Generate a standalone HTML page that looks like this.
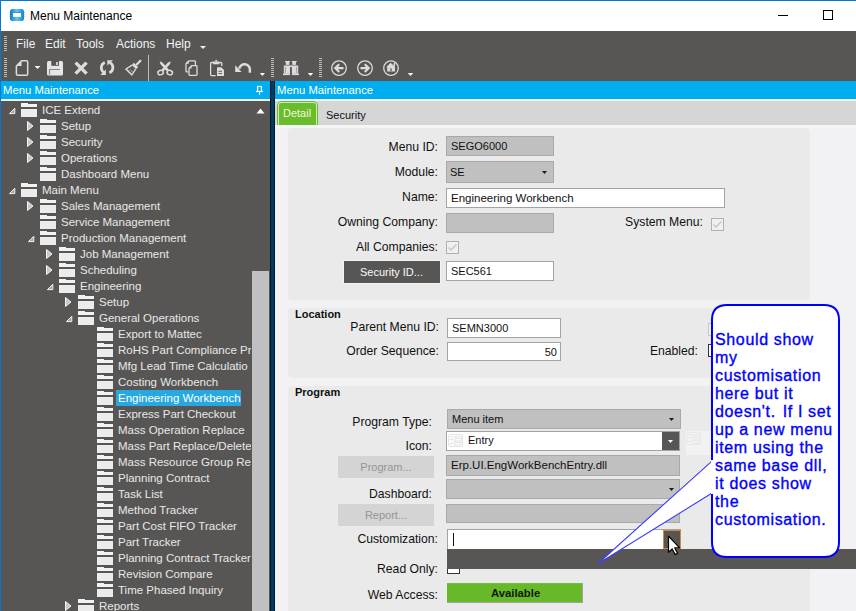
<!DOCTYPE html><html><head><meta charset="utf-8"><style>
*{margin:0;padding:0;box-sizing:border-box}
html,body{width:856px;height:611px;overflow:hidden;background:#f2f2f4;font-family:"Liberation Sans",sans-serif}
div,svg{position:absolute}
.t{white-space:nowrap}
.menu{color:#f2f2f2;font-size:12px;line-height:14px}
.tr{color:#e8e8e8;font-size:11.5px;line-height:16px;white-space:nowrap}
.lbl{font-size:12.2px;line-height:14px;color:#111;white-space:nowrap}
.inp{border:1px solid #a9a9a9;background:#c0c0c0;font-size:11px;line-height:18px;padding-left:4px;color:#111;white-space:nowrap;overflow:hidden}
.wh{background:#fff;border-color:#a3a3a3}
.grp{background:#eaeaea;border-radius:4px}
.ck{width:13px;height:13px;border:1px solid #b0b0b0;background:#f0f0f0}
</style></head><body>
<div style="left:0px;top:0px;width:856px;height:31px;background:#fff;"></div>
<div style="left:0px;top:0px;width:856px;height:1px;background:#0078d7;"></div>
<div style="left:0px;top:0px;width:1px;height:611px;background:#0078d7;"></div>
<svg style="left:9px;top:8px" width="16" height="14" viewBox="0 0 16 14">
<defs><linearGradient id="g1" x1="0" y1="0" x2="1" y2="0"><stop offset="0" stop-color="#0a7fc8"/><stop offset="0.5" stop-color="#5ecaf6"/><stop offset="1" stop-color="#0a8ad4"/></linearGradient></defs>
<rect x="1" y="1" width="14" height="12" rx="2.5" fill="url(#g1)"/>
<rect x="4" y="5" width="8" height="4" fill="#fff"/>
<path d="M0.5 4.5H15.5M0.5 6.5H4M12 6.5H15.5M0.5 8.5H4M12 8.5H15.5" stroke="#4a7c9c" stroke-width="0.8" opacity="0.8"/>
</svg>
<div class="t " style="left:30px;top:9px;font-size:12px;line-height:14px;color:#000">Menu Maintenance</div>
<div style="left:778px;top:15px;width:10px;height:1px;background:#000;"></div>
<div style="left:823px;top:10px;width:10px;height:10px;background:transparent;border:1px solid #000"></div>
<div style="left:1px;top:31px;width:855px;height:50px;background:#585655;"></div>
<div class="t menu" style="left:16px;top:37px;">File</div>
<div class="t menu" style="left:45px;top:37px;">Edit</div>
<div class="t menu" style="left:76px;top:37px;">Tools</div>
<div class="t menu" style="left:116px;top:37px;">Actions</div>
<div class="t menu" style="left:166px;top:37px;">Help</div>
<svg style="left:0;top:0" width="420" height="81" viewBox="0 0 420 81">
<path d="M4 36.5h3M4 38.5h3M4 40.5h3M4 42.5h3M4 44.5h3M4 46.5h3M4 48.5h3M4 50.5h3" stroke="#bdbdbd" stroke-width="1"/>
<path d="M4 58.5h3M4 60.5h3M4 62.5h3M4 64.5h3M4 66.5h3M4 68.5h3M4 70.5h3M4 72.5h3M4 74.5h3M4 76.5h3M271 58.5h3M271 60.5h3M271 62.5h3M271 64.5h3M271 66.5h3M271 68.5h3M271 70.5h3M271 72.5h3M271 74.5h3M271 76.5h3M319 58.5h3M319 60.5h3M319 62.5h3M319 64.5h3M319 66.5h3M319 68.5h3M319 70.5h3M319 72.5h3M319 74.5h3M319 76.5h3" stroke="#bdbdbd" stroke-width="1"/>
<path d="M200 46h6l-3 3z" fill="#f0f0f0"/>
<!-- new -->
<path d="M21.5 60.8H26.5Q27.7 60.8 27.7 62V74Q27.7 75.2 26.5 75.2H17.6Q16.4 75.2 16.4 74V66Z" fill="none" stroke="#dcdcdc" stroke-width="1.5" stroke-linejoin="round"/>
<path d="M16.6 66L21.5 61V66Z" fill="#dcdcdc"/>
<path d="M34.5 66h6l-3 3z" fill="#f4f4f4"/>
<!-- save -->
<path d="M48.5 61H61.5Q63 61 63 62.5V74Q63 75.6 61.5 75.6H48.5Q47 75.6 47 74V62.5Q47 61 48.5 61Z" fill="#e6e6e6"/>
<path d="M51.3 61H59V65.8H51.3Z" fill="#585655"/>
<rect x="56.2" y="62" width="1.6" height="3" fill="#e6e6e6"/>
<path d="M60 69.5H49.5V74.5" fill="none" stroke="#8a8886" stroke-width="1.2"/>
<!-- X -->
<path d="M75.6 62.6L86.6 73.6M86.6 62.6L75.6 73.6" stroke="#dcdcdc" stroke-width="3.4"/>
<!-- refresh -->
<path d="M104.8 62.5A5.6 5.6 0 0 0 104.2 72.6" fill="none" stroke="#dcdcdc" stroke-width="2.7"/>
<path d="M105.9 69.6V75H100.2Z" fill="#dcdcdc"/>
<path d="M109.4 72.7A5.6 5.6 0 0 0 110 62.6" fill="none" stroke="#dcdcdc" stroke-width="2.7"/>
<path d="M107.3 60.2H113L107.3 65.6Z" fill="#dcdcdc"/>
<!-- broom -->
<path d="M140.4 60.8L137 64.2" stroke="#dcdcdc" stroke-width="2.3" stroke-linecap="round"/>
<path d="M136.06 69.18L138.18 67.06L133.94 62.82L131.82 64.94Z" fill="#dcdcdc"/>
<path d="M135.7 68.8L131.9 75L125.9 69L132.2 65.2" fill="none" stroke="#dcdcdc" stroke-width="1.4" stroke-linejoin="round"/>
<path d="M128.5 70.2l1 1M130.6 69.6l1 1M129.6 72.2l1 1M131.8 71.4l1 1M127.2 68.6l0.8 0.8" stroke="#dcdcdc" stroke-width="0.9"/>
<path d="M132.9 66.3L135.1 68.5" stroke="#8a8886" stroke-width="0.5"/>
<!-- separator -->
<rect x="148" y="55" width="1" height="26" fill="#bdbdbd"/>
<!-- scissors -->
<path d="M159.7 61.2L162.4 62.6L168.8 69.6L166.8 71.2L160.4 64Z" fill="#dcdcdc"/>
<path d="M170.7 61.2L168 62.6L161.6 69.6L163.6 71.2L170 64Z" fill="#dcdcdc"/>
<ellipse cx="160.6" cy="72.6" rx="2.7" ry="2.2" fill="none" stroke="#dcdcdc" stroke-width="1.5" transform="rotate(-20 160.6 72.6)"/>
<ellipse cx="169.8" cy="72.6" rx="2.7" ry="2.2" fill="none" stroke="#dcdcdc" stroke-width="1.5" transform="rotate(20 169.8 72.6)"/>
<!-- copy -->
<path d="M188.8 60.8L186 63.8V71.2Q186 71.8 186.6 71.8H188.4" fill="none" stroke="#dcdcdc" stroke-width="1.3" stroke-linejoin="round"/>
<path d="M188.8 60.8H194.6Q195.4 60.8 195.4 61.6V65.2" fill="none" stroke="#dcdcdc" stroke-width="1.3"/>
<path d="M186 63.8L188.8 60.8V63.8Z" fill="#dcdcdc"/>
<path d="M191.6 65.6H196.2Q197 65.6 197 66.4V74.6Q197 75.4 196.2 75.4H189.8Q189 75.4 189 74.6V68.4Z" fill="none" stroke="#dcdcdc" stroke-width="1.3" stroke-linejoin="round"/>
<path d="M189 68.4L191.6 65.6V68.4Z" fill="#dcdcdc"/>
<!-- paste -->
<path d="M213 62.5H211.5Q210.6 62.5 210.6 63.5V74.6Q210.6 75.6 211.5 75.6H215.6M221.8 66V63.5Q221.8 62.5 220.8 62.5H219.4" fill="none" stroke="#dcdcdc" stroke-width="1.3"/>
<path d="M213 61.5H219.5V64.3H213Z" fill="#dcdcdc"/>
<circle cx="216.2" cy="60.8" r="1" fill="#dcdcdc"/>
<path d="M217 67.2H221.2L224 70V75.9H217Z" fill="#dcdcdc"/>
<path d="M218.5 71.3h3.5M218.5 73.5h3.5" stroke="#585655" stroke-width="0.9"/>
<!-- undo -->
<path d="M239.2 68.8A5.4 5.4 0 0 1 249.9 70.5V72.8" fill="none" stroke="#dcdcdc" stroke-width="2.5"/>
<path d="M235.2 65.2V72H241.6Z" fill="#dcdcdc"/>
<path d="M259.8 73h5.2l-2.6 3z" fill="#f4f4f4"/>
<!-- binoculars -->
<rect x="285" y="61" width="5" height="1" fill="#dcdcdc"/>
<rect x="285.8" y="61.5" width="3.6" height="3.4" fill="#dcdcdc"/>
<rect x="291.7" y="61" width="5" height="1" fill="#dcdcdc"/>
<rect x="292.3" y="61.5" width="3.6" height="3.4" fill="#dcdcdc"/>
<rect x="283.8" y="65.5" width="6.2" height="8.3" fill="#dcdcdc"/>
<rect x="291.9" y="65.5" width="6.3" height="8.3" fill="#dcdcdc"/>
<rect x="283" y="73.6" width="7" height="1.5" fill="#dcdcdc"/>
<rect x="291.9" y="73.6" width="7" height="1.5" fill="#dcdcdc"/>
<rect x="290" y="65.3" width="1.9" height="1.8" fill="#dcdcdc"/>
<path d="M285.4 67v6M296.6 67v6" stroke="#8a8886" stroke-width="0.7"/>
<path d="M307.7 73h5.6l-2.8 3z" fill="#f4f4f4"/>
<!-- back / fwd / home -->
<circle cx="339" cy="68.1" r="7.3" fill="none" stroke="#dcdcdc" stroke-width="1.3"/>
<path d="M343.5 68.1H335.8M339.2 64.2L335.3 68.1L339.2 72" fill="none" stroke="#dcdcdc" stroke-width="2.2"/>
<circle cx="365" cy="68.1" r="7.3" fill="none" stroke="#dcdcdc" stroke-width="1.3"/>
<path d="M360.5 68.1H368.2M364.8 64.2L368.7 68.1L364.8 72" fill="none" stroke="#dcdcdc" stroke-width="2.2"/>
<circle cx="391" cy="68.1" r="7.3" fill="none" stroke="#dcdcdc" stroke-width="1.3"/>
<path d="M386.2 67.2L390.6 62.8L395.4 67.2Z" fill="#dcdcdc"/>
<rect x="387.2" y="66.6" width="7.8" height="4.9" fill="#dcdcdc"/>
<rect x="393.5" y="63" width="1.6" height="3" fill="#dcdcdc"/>
<rect x="389.9" y="68.3" width="2.1" height="3.2" fill="#8a8886"/>
<path d="M407.7 73h5.6l-2.8 3z" fill="#f4f4f4"/>
</svg>
<div style="left:1px;top:81px;width:269px;height:18px;background:#00adef;"></div>
<div class="t " style="left:3px;top:83px;font-size:11.3px;line-height:14px;color:#fff">Menu Maintenance</div>
<div style="left:1px;top:99px;width:269px;height:2px;background:#f6f3ef;"></div>
<div style="left:1px;top:101px;width:269px;height:510px;background:#585655;"></div>
<div style="left:1px;top:101px;width:250px;height:510px;overflow:hidden">
<svg style="left:8px;top:6px" width="7" height="8" viewBox="0 0 7 8"><path d="M5.8 1.2V6.6H0.4Z" fill="#a8a6a4" stroke="#f0f0f0" stroke-width="1"/></svg>
<svg style="left:20px;top:1px" width="16" height="15" viewBox="0 0 16 15"><rect x="0" y="1" width="7" height="2" fill="#f2f2f2"/><rect x="0" y="2" width="16" height="3" fill="#f2f2f2"/><rect x="0" y="7" width="16" height="8" fill="#ececec"/></svg>
<div class="tr" style="left:41px;top:1px">ICE Extend</div>
<svg style="left:26px;top:20px" width="7" height="10" viewBox="0 0 7 10"><path d="M0.5 0.5L6 5L0.5 9.5Z" fill="#c8c8c8" stroke="#f4f4f4" stroke-width="1"/></svg>
<svg style="left:39px;top:17px" width="16" height="15" viewBox="0 0 16 15"><rect x="0" y="1" width="7" height="2" fill="#f2f2f2"/><rect x="0" y="2" width="16" height="3" fill="#f2f2f2"/><rect x="0" y="7" width="16" height="8" fill="#ececec"/></svg>
<div class="tr" style="left:60px;top:17px">Setup</div>
<svg style="left:26px;top:36px" width="7" height="10" viewBox="0 0 7 10"><path d="M0.5 0.5L6 5L0.5 9.5Z" fill="#c8c8c8" stroke="#f4f4f4" stroke-width="1"/></svg>
<svg style="left:39px;top:33px" width="16" height="15" viewBox="0 0 16 15"><rect x="0" y="1" width="7" height="2" fill="#f2f2f2"/><rect x="0" y="2" width="16" height="3" fill="#f2f2f2"/><rect x="0" y="7" width="16" height="8" fill="#ececec"/></svg>
<div class="tr" style="left:60px;top:33px">Security</div>
<svg style="left:26px;top:52px" width="7" height="10" viewBox="0 0 7 10"><path d="M0.5 0.5L6 5L0.5 9.5Z" fill="#c8c8c8" stroke="#f4f4f4" stroke-width="1"/></svg>
<svg style="left:39px;top:49px" width="16" height="15" viewBox="0 0 16 15"><rect x="0" y="1" width="7" height="2" fill="#f2f2f2"/><rect x="0" y="2" width="16" height="3" fill="#f2f2f2"/><rect x="0" y="7" width="16" height="8" fill="#ececec"/></svg>
<div class="tr" style="left:60px;top:49px">Operations</div>
<svg style="left:39px;top:65px" width="16" height="15" viewBox="0 0 16 15"><rect x="0" y="1" width="7" height="2" fill="#f2f2f2"/><rect x="0" y="2" width="16" height="3" fill="#f2f2f2"/><rect x="0" y="7" width="16" height="8" fill="#ececec"/></svg>
<div class="tr" style="left:60px;top:65px">Dashboard Menu</div>
<svg style="left:8px;top:86px" width="7" height="8" viewBox="0 0 7 8"><path d="M5.8 1.2V6.6H0.4Z" fill="#a8a6a4" stroke="#f0f0f0" stroke-width="1"/></svg>
<svg style="left:20px;top:81px" width="16" height="15" viewBox="0 0 16 15"><rect x="0" y="1" width="7" height="2" fill="#f2f2f2"/><rect x="0" y="2" width="16" height="3" fill="#f2f2f2"/><rect x="0" y="7" width="16" height="8" fill="#ececec"/></svg>
<div class="tr" style="left:41px;top:81px">Main Menu</div>
<svg style="left:26px;top:100px" width="7" height="10" viewBox="0 0 7 10"><path d="M0.5 0.5L6 5L0.5 9.5Z" fill="#c8c8c8" stroke="#f4f4f4" stroke-width="1"/></svg>
<svg style="left:39px;top:97px" width="16" height="15" viewBox="0 0 16 15"><rect x="0" y="1" width="7" height="2" fill="#f2f2f2"/><rect x="0" y="2" width="16" height="3" fill="#f2f2f2"/><rect x="0" y="7" width="16" height="8" fill="#ececec"/></svg>
<div class="tr" style="left:60px;top:97px">Sales Management</div>
<svg style="left:39px;top:113px" width="16" height="15" viewBox="0 0 16 15"><rect x="0" y="1" width="7" height="2" fill="#f2f2f2"/><rect x="0" y="2" width="16" height="3" fill="#f2f2f2"/><rect x="0" y="7" width="16" height="8" fill="#ececec"/></svg>
<div class="tr" style="left:60px;top:113px">Service Management</div>
<svg style="left:27px;top:134px" width="7" height="8" viewBox="0 0 7 8"><path d="M5.8 1.2V6.6H0.4Z" fill="#a8a6a4" stroke="#f0f0f0" stroke-width="1"/></svg>
<svg style="left:39px;top:129px" width="16" height="15" viewBox="0 0 16 15"><rect x="0" y="1" width="7" height="2" fill="#f2f2f2"/><rect x="0" y="2" width="16" height="3" fill="#f2f2f2"/><rect x="0" y="7" width="16" height="8" fill="#ececec"/></svg>
<div class="tr" style="left:60px;top:129px">Production Management</div>
<svg style="left:45px;top:148px" width="7" height="10" viewBox="0 0 7 10"><path d="M0.5 0.5L6 5L0.5 9.5Z" fill="#c8c8c8" stroke="#f4f4f4" stroke-width="1"/></svg>
<svg style="left:58px;top:145px" width="16" height="15" viewBox="0 0 16 15"><rect x="0" y="1" width="7" height="2" fill="#f2f2f2"/><rect x="0" y="2" width="16" height="3" fill="#f2f2f2"/><rect x="0" y="7" width="16" height="8" fill="#ececec"/></svg>
<div class="tr" style="left:79px;top:145px">Job Management</div>
<svg style="left:45px;top:164px" width="7" height="10" viewBox="0 0 7 10"><path d="M0.5 0.5L6 5L0.5 9.5Z" fill="#c8c8c8" stroke="#f4f4f4" stroke-width="1"/></svg>
<svg style="left:58px;top:161px" width="16" height="15" viewBox="0 0 16 15"><rect x="0" y="1" width="7" height="2" fill="#f2f2f2"/><rect x="0" y="2" width="16" height="3" fill="#f2f2f2"/><rect x="0" y="7" width="16" height="8" fill="#ececec"/></svg>
<div class="tr" style="left:79px;top:161px">Scheduling</div>
<svg style="left:46px;top:182px" width="7" height="8" viewBox="0 0 7 8"><path d="M5.8 1.2V6.6H0.4Z" fill="#a8a6a4" stroke="#f0f0f0" stroke-width="1"/></svg>
<svg style="left:58px;top:177px" width="16" height="15" viewBox="0 0 16 15"><rect x="0" y="1" width="7" height="2" fill="#f2f2f2"/><rect x="0" y="2" width="16" height="3" fill="#f2f2f2"/><rect x="0" y="7" width="16" height="8" fill="#ececec"/></svg>
<div class="tr" style="left:79px;top:177px">Engineering</div>
<svg style="left:64px;top:196px" width="7" height="10" viewBox="0 0 7 10"><path d="M0.5 0.5L6 5L0.5 9.5Z" fill="#c8c8c8" stroke="#f4f4f4" stroke-width="1"/></svg>
<svg style="left:77px;top:193px" width="16" height="15" viewBox="0 0 16 15"><rect x="0" y="1" width="7" height="2" fill="#f2f2f2"/><rect x="0" y="2" width="16" height="3" fill="#f2f2f2"/><rect x="0" y="7" width="16" height="8" fill="#ececec"/></svg>
<div class="tr" style="left:98px;top:193px">Setup</div>
<svg style="left:65px;top:214px" width="7" height="8" viewBox="0 0 7 8"><path d="M5.8 1.2V6.6H0.4Z" fill="#a8a6a4" stroke="#f0f0f0" stroke-width="1"/></svg>
<svg style="left:77px;top:209px" width="16" height="15" viewBox="0 0 16 15"><rect x="0" y="1" width="7" height="2" fill="#f2f2f2"/><rect x="0" y="2" width="16" height="3" fill="#f2f2f2"/><rect x="0" y="7" width="16" height="8" fill="#ececec"/></svg>
<div class="tr" style="left:98px;top:209px">General Operations</div>
<svg style="left:96px;top:225px" width="16" height="15" viewBox="0 0 16 15"><rect x="0" y="1" width="7" height="2" fill="#f2f2f2"/><rect x="0" y="2" width="16" height="3" fill="#f2f2f2"/><rect x="0" y="7" width="16" height="8" fill="#ececec"/></svg>
<div class="tr" style="left:117px;top:225px">Export to Mattec</div>
<svg style="left:96px;top:241px" width="16" height="15" viewBox="0 0 16 15"><rect x="0" y="1" width="7" height="2" fill="#f2f2f2"/><rect x="0" y="2" width="16" height="3" fill="#f2f2f2"/><rect x="0" y="7" width="16" height="8" fill="#ececec"/></svg>
<div class="tr" style="left:117px;top:241px">RoHS Part Compliance Process</div>
<svg style="left:96px;top:257px" width="16" height="15" viewBox="0 0 16 15"><rect x="0" y="1" width="7" height="2" fill="#f2f2f2"/><rect x="0" y="2" width="16" height="3" fill="#f2f2f2"/><rect x="0" y="7" width="16" height="8" fill="#ececec"/></svg>
<div class="tr" style="left:117px;top:257px">Mfg Lead Time Calculatio</div>
<svg style="left:96px;top:273px" width="16" height="15" viewBox="0 0 16 15"><rect x="0" y="1" width="7" height="2" fill="#f2f2f2"/><rect x="0" y="2" width="16" height="3" fill="#f2f2f2"/><rect x="0" y="7" width="16" height="8" fill="#ececec"/></svg>
<div class="tr" style="left:117px;top:273px">Costing Workbench</div>
<svg style="left:96px;top:289px" width="16" height="15" viewBox="0 0 16 15"><rect x="0" y="1" width="7" height="2" fill="#f2f2f2"/><rect x="0" y="2" width="16" height="3" fill="#f2f2f2"/><rect x="0" y="7" width="16" height="8" fill="#ececec"/></svg>
<div style="left:115px;top:289px;width:125px;height:16px;background:#28a8e0"></div>
<div class="tr" style="left:117px;top:289px;color:#fff">Engineering Workbench</div>
<svg style="left:96px;top:305px" width="16" height="15" viewBox="0 0 16 15"><rect x="0" y="1" width="7" height="2" fill="#f2f2f2"/><rect x="0" y="2" width="16" height="3" fill="#f2f2f2"/><rect x="0" y="7" width="16" height="8" fill="#ececec"/></svg>
<div class="tr" style="left:117px;top:305px">Express Part Checkout</div>
<svg style="left:96px;top:321px" width="16" height="15" viewBox="0 0 16 15"><rect x="0" y="1" width="7" height="2" fill="#f2f2f2"/><rect x="0" y="2" width="16" height="3" fill="#f2f2f2"/><rect x="0" y="7" width="16" height="8" fill="#ececec"/></svg>
<div class="tr" style="left:117px;top:321px">Mass Operation Replace</div>
<svg style="left:96px;top:337px" width="16" height="15" viewBox="0 0 16 15"><rect x="0" y="1" width="7" height="2" fill="#f2f2f2"/><rect x="0" y="2" width="16" height="3" fill="#f2f2f2"/><rect x="0" y="7" width="16" height="8" fill="#ececec"/></svg>
<div class="tr" style="left:117px;top:337px">Mass Part Replace/Delete</div>
<svg style="left:96px;top:353px" width="16" height="15" viewBox="0 0 16 15"><rect x="0" y="1" width="7" height="2" fill="#f2f2f2"/><rect x="0" y="2" width="16" height="3" fill="#f2f2f2"/><rect x="0" y="7" width="16" height="8" fill="#ececec"/></svg>
<div class="tr" style="left:117px;top:353px">Mass Resource Group Replace</div>
<svg style="left:96px;top:369px" width="16" height="15" viewBox="0 0 16 15"><rect x="0" y="1" width="7" height="2" fill="#f2f2f2"/><rect x="0" y="2" width="16" height="3" fill="#f2f2f2"/><rect x="0" y="7" width="16" height="8" fill="#ececec"/></svg>
<div class="tr" style="left:117px;top:369px">Planning Contract</div>
<svg style="left:96px;top:385px" width="16" height="15" viewBox="0 0 16 15"><rect x="0" y="1" width="7" height="2" fill="#f2f2f2"/><rect x="0" y="2" width="16" height="3" fill="#f2f2f2"/><rect x="0" y="7" width="16" height="8" fill="#ececec"/></svg>
<div class="tr" style="left:117px;top:385px">Task List</div>
<svg style="left:96px;top:401px" width="16" height="15" viewBox="0 0 16 15"><rect x="0" y="1" width="7" height="2" fill="#f2f2f2"/><rect x="0" y="2" width="16" height="3" fill="#f2f2f2"/><rect x="0" y="7" width="16" height="8" fill="#ececec"/></svg>
<div class="tr" style="left:117px;top:401px">Method Tracker</div>
<svg style="left:96px;top:417px" width="16" height="15" viewBox="0 0 16 15"><rect x="0" y="1" width="7" height="2" fill="#f2f2f2"/><rect x="0" y="2" width="16" height="3" fill="#f2f2f2"/><rect x="0" y="7" width="16" height="8" fill="#ececec"/></svg>
<div class="tr" style="left:117px;top:417px">Part Cost FIFO Tracker</div>
<svg style="left:96px;top:433px" width="16" height="15" viewBox="0 0 16 15"><rect x="0" y="1" width="7" height="2" fill="#f2f2f2"/><rect x="0" y="2" width="16" height="3" fill="#f2f2f2"/><rect x="0" y="7" width="16" height="8" fill="#ececec"/></svg>
<div class="tr" style="left:117px;top:433px">Part Tracker</div>
<svg style="left:96px;top:449px" width="16" height="15" viewBox="0 0 16 15"><rect x="0" y="1" width="7" height="2" fill="#f2f2f2"/><rect x="0" y="2" width="16" height="3" fill="#f2f2f2"/><rect x="0" y="7" width="16" height="8" fill="#ececec"/></svg>
<div class="tr" style="left:117px;top:449px">Planning Contract Tracker</div>
<svg style="left:96px;top:465px" width="16" height="15" viewBox="0 0 16 15"><rect x="0" y="1" width="7" height="2" fill="#f2f2f2"/><rect x="0" y="2" width="16" height="3" fill="#f2f2f2"/><rect x="0" y="7" width="16" height="8" fill="#ececec"/></svg>
<div class="tr" style="left:117px;top:465px">Revision Compare</div>
<svg style="left:96px;top:481px" width="16" height="15" viewBox="0 0 16 15"><rect x="0" y="1" width="7" height="2" fill="#f2f2f2"/><rect x="0" y="2" width="16" height="3" fill="#f2f2f2"/><rect x="0" y="7" width="16" height="8" fill="#ececec"/></svg>
<div class="tr" style="left:117px;top:481px">Time Phased Inquiry</div>
<svg style="left:64px;top:500px" width="7" height="10" viewBox="0 0 7 10"><path d="M0.5 0.5L6 5L0.5 9.5Z" fill="#c8c8c8" stroke="#f4f4f4" stroke-width="1"/></svg>
<svg style="left:77px;top:497px" width="16" height="15" viewBox="0 0 16 15"><rect x="0" y="1" width="7" height="2" fill="#f2f2f2"/><rect x="0" y="2" width="16" height="3" fill="#f2f2f2"/><rect x="0" y="7" width="16" height="8" fill="#ececec"/></svg>
<div class="tr" style="left:98px;top:497px">Reports</div>
</div>
<svg style="left:256px;top:108px" width="9" height="6" viewBox="0 0 9 6"><path d="M0.5 5.5L4.5 0.5L8.5 5.5Z" fill="#fff"/></svg>
<div style="left:252px;top:271px;width:17px;height:340px;background:#c0c0c0;"></div>
<div style="left:270px;top:81px;width:5px;height:530px;background:#003c60;border-left:1px solid #061722;border-right:1px solid #061722"></div>
<div style="left:275px;top:81px;width:581px;height:18px;background:#00adef;"></div>
<div class="t " style="left:277px;top:83px;font-size:11.3px;line-height:14px;color:#fff">Menu Maintenance</div>
<div style="left:275px;top:99px;width:581px;height:2px;background:#f6f6f6;"></div>
<div style="left:275px;top:101px;width:581px;height:24px;background:#d6d6d6;"></div>
<div style="left:275px;top:125px;width:581px;height:3px;background:#f6f6f6;"></div>
<div style="left:277px;top:101px;width:41px;height:24px;background:#69bc2b;border-radius:5px 5px 0 0"></div>
<div style="left:278px;top:102px;width:39px;height:23px;border:1px solid #cfe9bb;border-bottom:none;border-radius:4px 4px 0 0"></div>
<div class="t " style="left:283px;top:107px;font-size:11px;line-height:12px;color:#f4f8dc">Detail</div>
<div class="t " style="left:326px;top:109px;font-size:11px;line-height:12px;color:#111">Security</div>
<div class="grp" style="left:288px;top:128px;width:522px;height:172px"></div>
<div class="grp" style="left:288px;top:308px;width:522px;height:70px"></div>
<div class="grp" style="left:288px;top:386px;width:522px;height:230px"></div>
<div class="lbl" style="right:418px;top:140px;">Menu ID:</div>
<div class="inp" style="left:446px;top:136px;width:108px;height:20px;">SEGO6000</div>
<div class="lbl" style="right:418px;top:165px;">Module:</div>
<div class="inp" style="left:446px;top:161px;width:108px;height:22px;line-height:20px;padding-left:3px">SE</div>
<svg style="left:541.5px;top:171px" width="5" height="3" viewBox="0 0 5 3"><path d="M0 0H5L2.5 3Z" fill="#1a1a1a"/></svg>
<div class="lbl" style="right:418px;top:190px;">Name:</div>
<div class="inp wh" style="left:446px;top:188px;width:279px;height:20px;font-size:11.5px">Engineering Workbench</div>
<div class="lbl" style="right:418px;top:215px;">Owning Company:</div>
<div class="inp" style="left:446px;top:213px;width:108px;height:20px;"></div>
<div class="lbl" style="right:153px;top:215px;">System Menu:</div>
<div class="ck" style="left:711px;top:218px;border-color:#b0b0b0;background:#f0f0f0"></div>
<svg style="left:711px;top:218px" width="13" height="13" viewBox="0 0 13 13"><path d="M2.5 6.5L5 9L10.5 3.5" fill="none" stroke="#c4c4c4" stroke-width="1.3"/></svg>
<div class="lbl" style="right:418px;top:240px;">All Companies:</div>
<div class="ck" style="left:446px;top:241px;border-color:#b0b0b0;background:#f0f0f0"></div>
<svg style="left:446px;top:241px" width="13" height="13" viewBox="0 0 13 13"><path d="M2.5 6.5L5 9L10.5 3.5" fill="none" stroke="#c4c4c4" stroke-width="1.3"/></svg>
<div style="left:343px;top:260px;width:98px;height:24px;background:#585655;border:1px solid #f2f2f2"></div>
<div class="t " style="left:360px;top:266px;font-size:11px;line-height:12px;color:#fafafa">Security ID...</div>
<div class="inp wh" style="left:446px;top:261px;width:108px;height:20px;">SEC561</div>
<div class="t " style="left:295px;top:308px;font-size:11px;line-height:12px;font-weight:bold;color:#111">Location</div>
<div class="lbl" style="right:417px;top:320px;">Parent Menu ID:</div>
<div class="inp wh" style="left:447px;top:318px;width:114px;height:20px;">SEMN3000</div>
<div class="lbl" style="right:417px;top:344px;">Order Sequence:</div>
<div class="inp wh" style="left:447px;top:342px;width:114px;height:19px;text-align:right;padding-right:3px">50</div>
<div class="lbl" style="right:158px;top:344px;">Enabled:</div>
<div style="left:708px;top:344px;width:13px;height:13px;border:1px solid #333;background:#fff"></div>
<div style="left:708px;top:323px;width:13px;height:13px;border:1px solid #c8c8c8;background:#f0f0f0"></div>
<div class="t " style="left:295px;top:386px;font-size:11px;line-height:12px;font-weight:bold;color:#111">Program</div>
<div class="lbl" style="right:424px;top:415px;">Program Type:</div>
<div class="inp" style="left:447px;top:409px;width:234px;height:20px;line-height:18px">Menu item</div>
<svg style="left:668.5px;top:418px" width="5" height="3" viewBox="0 0 5 3"><path d="M0 0H5L2.5 3Z" fill="#1a1a1a"/></svg>
<div class="lbl" style="right:424px;top:439px;">Icon:</div>
<div class="inp wh" style="left:446px;top:431px;width:234px;height:20px;"></div>
<svg style="left:448px;top:434px" width="15" height="13" viewBox="0 0 15 13"><rect x="0.5" y="0.5" width="14" height="12" rx="1.5" fill="#fbfbfb" stroke="#e6e6e6"/><path d="M0.5 2.8H14.5" stroke="#e6e6e6"/><path d="M2 5.5h3M2 9.5h3" stroke="#e0e0e0"/><rect x="6.5" y="4.5" width="6.5" height="2.5" fill="none" stroke="#e6e6e6"/><rect x="6.5" y="8.5" width="6.5" height="2.5" fill="none" stroke="#e6e6e6"/></svg>
<div class="t " style="left:468px;top:434px;font-size:11px;line-height:12px;color:#111">Entry</div>
<div style="left:662px;top:432px;width:17px;height:18px;background:#585655;"></div>
<svg style="left:667.5px;top:440px" width="5" height="3" viewBox="0 0 5 3"><path d="M0 0H5L2.5 3Z" fill="#fff"/></svg>
<div style="left:686px;top:431px;width:26px;height:24px;background:#f2f2f4"></div>
<svg style="left:687px;top:432px" width="14" height="13" viewBox="0 0 14 13"><rect x="0.5" y="0.5" width="13" height="12" rx="1.5" fill="#f2f2f4" stroke="#e8e8e8"/><path d="M0.5 2.8H13.5" stroke="#e8e8e8"/><path d="M1.5 5.5h3M1.5 9.5h3" stroke="#e4e4e4"/><rect x="6" y="4.5" width="6" height="2.5" fill="none" stroke="#e8e8e8"/><rect x="6" y="8.5" width="6" height="2.5" fill="none" stroke="#e8e8e8"/></svg>
<div style="left:338px;top:456px;width:96px;height:22px;background:#d4d4d4;"></div>
<div class="t" style="left:338px;top:461px;width:96px;text-align:center;font-size:11px;line-height:12px;color:#949494">Program...</div>
<div class="inp" style="left:446px;top:455px;width:234px;height:21px;padding-left:4px;font-size:11.5px">Erp.UI.EngWorkBenchEntry.dll</div>
<div class="lbl" style="right:424px;top:487px;">Dashboard:</div>
<div class="inp" style="left:446px;top:479px;width:234px;height:20px;"></div>
<svg style="left:668.5px;top:488px" width="5" height="3" viewBox="0 0 5 3"><path d="M0 0H5L2.5 3Z" fill="#1a1a1a"/></svg>
<div style="left:338px;top:504px;width:96px;height:22px;background:#d4d4d4;"></div>
<div class="t" style="left:338px;top:509px;width:96px;text-align:center;font-size:11px;line-height:12px;color:#949494">Report...</div>
<div class="inp" style="left:446px;top:504px;width:234px;height:19px;"></div>
<div class="lbl" style="right:418px;top:532px;">Customization:</div>
<div class="inp wh" style="left:447px;top:529px;width:234px;height:21px;"></div>
<div style="left:453px;top:533px;width:1.3px;height:13px;background:#111;"></div>
<div style="left:663px;top:530px;width:18px;height:19px;background:#585655;border:1px solid #d28a36"></div>
<div class="lbl" style="right:418px;top:562px;">Read Only:</div>
<div style="left:447px;top:561px;width:13px;height:13px;border:1px solid #333;background:#fff"></div>
<div style="left:447px;top:549px;width:409px;height:20px;background:#585655;"></div>
<div class="lbl" style="right:418px;top:588px;">Web Access:</div>
<div style="left:447px;top:583px;width:136px;height:20px;background:#67b92a;border-top:1px solid #70c234;border-right:1px solid #a4a4a4;border-bottom:1px solid #a4a4a4"></div>
<div class="t " style="left:491px;top:587px;font-size:11.3px;line-height:12px;font-weight:bold;color:#101a08">Available</div>
<svg style="left:255px;top:84px" width="10" height="12" viewBox="0 0 10 12"><path d="M2.6 2.5V7.5M6.4 2.5V7.5" stroke="#fff" stroke-width="1.3"/><path d="M2 2.4H7" stroke="#fff" stroke-width="1"/><path d="M1 7.5H8" stroke="#fff" stroke-width="1.2"/><path d="M4.5 8V11" stroke="#fff" stroke-width="1.2"/></svg>
<svg style="left:590px;top:300px" width="266" height="270" viewBox="590 300 266 270">
<path d="M712 461V320Q712 305 727 305H824Q839 305 839 320V542Q839 557 824 557H727Q712 557 712 542V493" fill="#fff" stroke="#0000ff" stroke-width="2"/>
<path d="M712.5 460.6L597.5 564L712.5 492.8" fill="#fff" stroke="#3c3cff" stroke-width="1.1"/>
<rect x="711" y="460" width="4" height="34" fill="#fff"/>
</svg>
<div style="left:715px;top:331px;width:130px;font-size:16px;letter-spacing:0.65px;word-spacing:0;-webkit-text-stroke:0.35px #0000ff;line-height:18px;color:#0000ff;white-space:nowrap">Should show<br>my<br>customisation<br>here but it<br>doesn&#39;t. <span style="margin-left:1.8px">If I set</span><br>up a new menu<br>item using the<br>same base dll,<br>it does show<br>the<br>customisation.</div>
<svg style="left:667px;top:535px" width="14" height="21" viewBox="0 0 14 21"><path d="M1.5 1.2V17.3L5.2 14L8.2 19.6L10.6 18.5L7.8 12.9H12.6Z" fill="#fff" stroke="#000" stroke-width="1.2" stroke-linejoin="round"/></svg>
</body></html>
